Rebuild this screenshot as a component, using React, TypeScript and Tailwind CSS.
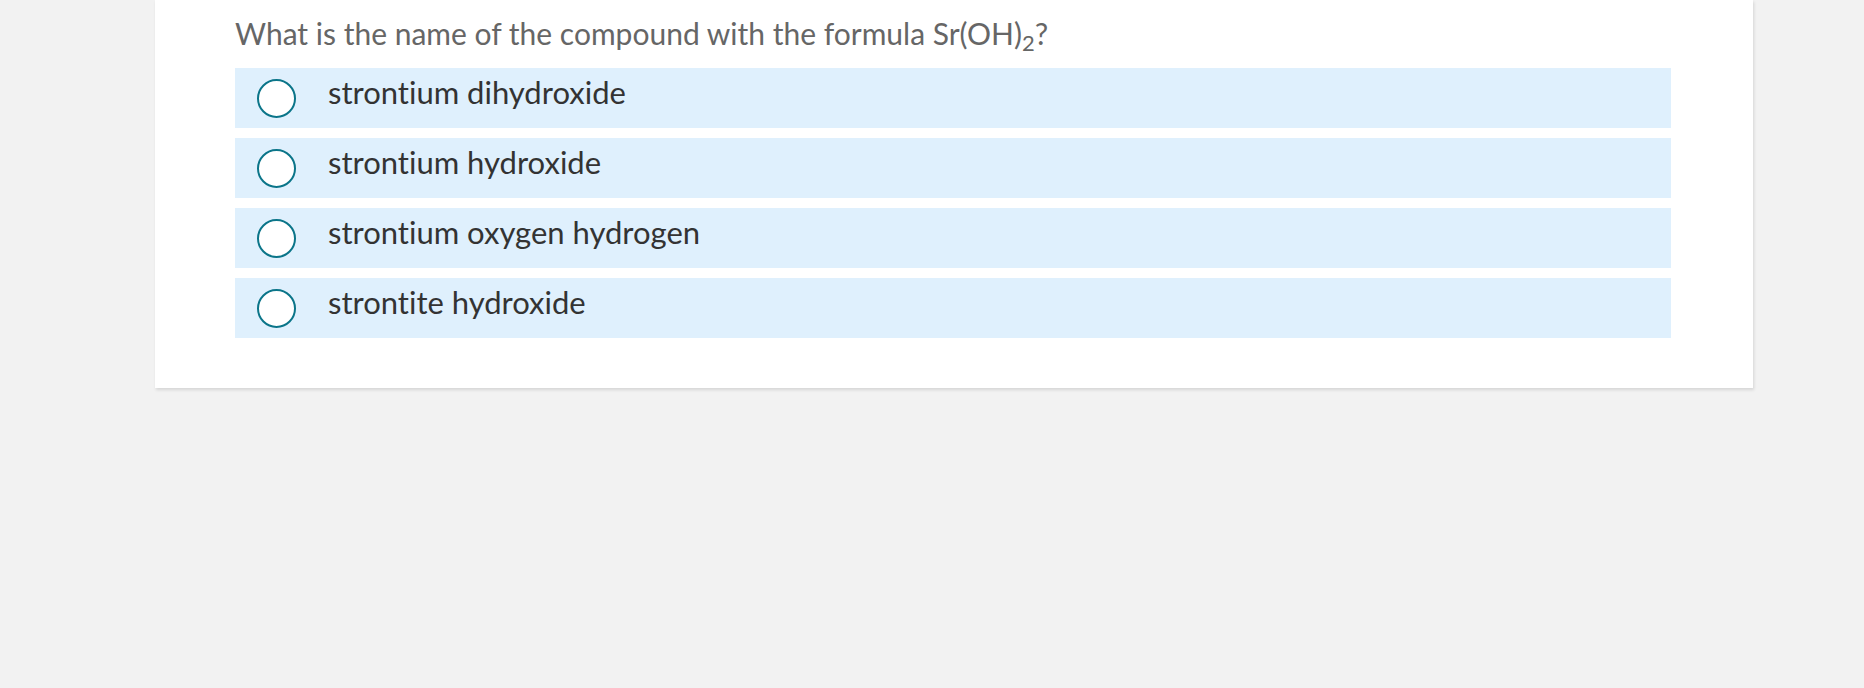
const OPTIONS = [
  "strontium dihydroxide",
  "strontium hydroxide",
  "strontium oxygen hydrogen",
  "strontite hydroxide",
];

function Radio() {
  return (
    <span className="block h-[39px] w-[39px] shrink-0 rounded-full border-[2.5px] border-[#0b7589] bg-white" />
  );
}

export default function App() {
  return (
    <div
      className="min-h-screen bg-[#f2f2f2] [font-variant-ligatures:none]"
      style={{ fontFamily: "Lato, 'Noto Sans', sans-serif" }}
    >
      <div className="ml-[155px] w-[1598px] bg-white pl-[80px] pr-[82px] pt-[12px] pb-[50px] shadow-[1px_2px_3px_rgba(0,0,0,0.12)]">
        {/* Question */}
        <p className="mb-[14px] text-[30px] leading-[42px] text-[#666666]">
          What is the name of the compound with the formula Sr(OH)<sub className="text-[22px]">2</sub>?
        </p>

        {/* Answer choices */}
        <div className="flex flex-col gap-[10px]">
          {OPTIONS.map((opt) => (
            <label
              key={opt}
              className="flex h-[60px] cursor-pointer items-center bg-[#dff0fd] pl-[22px]"
            >
              <Radio />
              <span className="ml-[32px] -mt-[12px] text-[31px] leading-[40px] text-[#333333]">
                {opt}
              </span>
            </label>
          ))}
        </div>
      </div>
    </div>
  );
}
